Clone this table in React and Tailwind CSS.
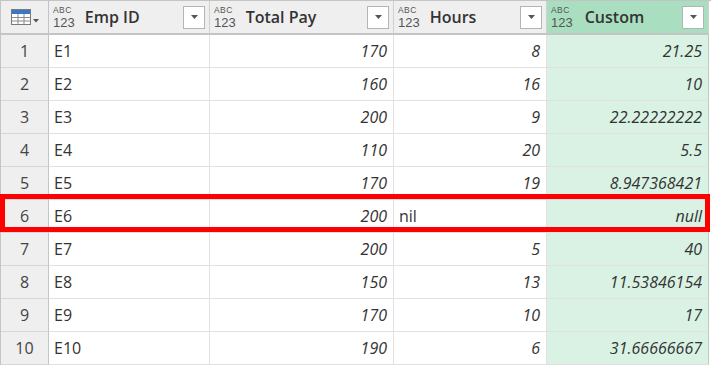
import React from 'react';

const rows = [
  { id: 'E1', pay: '170', hours: '8', custom: '21.25' },
  { id: 'E2', pay: '160', hours: '16', custom: '10' },
  { id: 'E3', pay: '200', hours: '9', custom: '22.22222222' },
  { id: 'E4', pay: '110', hours: '20', custom: '5.5' },
  { id: 'E5', pay: '170', hours: '19', custom: '8.947368421' },
  { id: 'E6', pay: '200', hours: 'nil', custom: 'null', text: true },
  { id: 'E7', pay: '200', hours: '5', custom: '40' },
  { id: 'E8', pay: '150', hours: '13', custom: '11.53846154' },
  { id: 'E9', pay: '170', hours: '10', custom: '17' },
  { id: 'E10', pay: '190', hours: '6', custom: '31.66666667' },
];

// ABC / 123 type badge shown left of each column title
const TypeIcon = () => (
  <div
    className="flex flex-col items-start text-[#555] mr-[10px] shrink-0"
    style={{ fontFamily: '"Liberation Sans", Arial, sans-serif' }}
  >
    <span className="block h-[10px] text-[8.5px] leading-[10px] tracking-[0.4px]">ABC</span>
    <span className="block h-[15px] text-[13px] leading-[15px]">123</span>
  </div>
);

const Dropdown = () => (
  <div className="ml-auto w-[22px] h-[23px] bg-white border border-[#b4b4b4] flex items-center justify-center shrink-0">
    <svg width="7" height="4" viewBox="0 0 7 4">
      <path d="M0 0 H7 L3.5 4 Z" fill="#555" />
    </svg>
  </div>
);

const TableIcon = () => (
  <div className="flex items-end gap-[2px]">
    <svg width="20" height="16" viewBox="0 0 20 16">
      <rect x="0.5" y="0.5" width="19" height="15" fill="#fff" stroke="#7a7a7a" />
      <rect x="1" y="1" width="18" height="4" fill="#3b78c4" />
      <path d="M1 8.5 H19 M1 12 H19 M7 5 V15 M13 5 V15" stroke="#8a8a8a" strokeWidth="1" />
    </svg>
    <svg width="6" height="4" viewBox="0 0 6 4" className="mb-[2px]">
      <path d="M0 0 H6 L3 3.5 Z" fill="#555" />
    </svg>
  </div>
);

const Header = ({ title, green }) => (
  <div
    className={`h-[34px] flex items-center pl-[4px] pr-[4px] border-r border-[#d0d0d0] border-b-2 border-b-[#c4c4c4] ${
      green ? 'bg-[#a9dfc0]' : 'bg-[#efefef]'
    }`}
  >
    <TypeIcon />
    <span className={`text-[16px] font-semibold text-[#333] ${green ? 'ml-[2px]' : ''}`}>{title}</span>
    <Dropdown />
  </div>
);

export default function App() {
  return (
    <div className="w-[711px] h-[365px] bg-white relative" style={{ fontFamily: '"Open Sans", "Noto Sans", sans-serif' }}>
      <div className="grid grid-cols-[48px_161px_184px_153px_162px] border-l border-t border-[#c4c4c4]">
        <div className="h-[34px] flex items-center justify-center bg-[#efefef] border-r border-[#c4c4c4] border-b-2 border-b-[#c4c4c4]">
          <TableIcon />
        </div>
        <Header title="Emp ID" />
        <Header title="Total Pay" />
        <Header title="Hours" />
        <Header title="Custom" green />

        {rows.map((r, i) => (
          <React.Fragment key={r.id}>
            <div className="h-[33px] flex items-center justify-center bg-[#efefef] border-r border-[#c4c4c4] border-b border-b-[#d6d6d6] text-[16px] text-[#444]">
              {i + 1}
            </div>
            <div className="h-[33px] flex items-center pl-[5px] border-r border-b border-[#e1e1e1] text-[16px] text-[#333]">
              {r.id}
            </div>
            <div className="h-[33px] flex items-center justify-end pr-[6px] border-r border-b border-[#e1e1e1] text-[16px] italic text-[#333]">
              {r.pay}
            </div>
            {r.text ? (
              <div className="h-[33px] flex items-center pl-[5px] border-r border-b border-[#e1e1e1] text-[16px] text-[#333]">
                {r.hours}
              </div>
            ) : (
              <div className="h-[33px] flex items-center justify-end pr-[6px] border-r border-b border-[#e1e1e1] text-[16px] italic text-[#333]">
                {r.hours}
              </div>
            )}
            <div className="h-[33px] flex items-center justify-end pr-[6px] bg-[#d9f2e4] border-r border-b border-[#e1e1e1] border-r-[#c4c4c4] text-[16px] italic text-[#333]">
              {r.custom}
            </div>
          </React.Fragment>
        ))}
      </div>

      {/* highlight around row 6 */}
      <div className="absolute left-0 top-[194px] w-[710px] h-[38px] border-[5px] border-[#ff0000] pointer-events-none" />
    </div>
  );
}
